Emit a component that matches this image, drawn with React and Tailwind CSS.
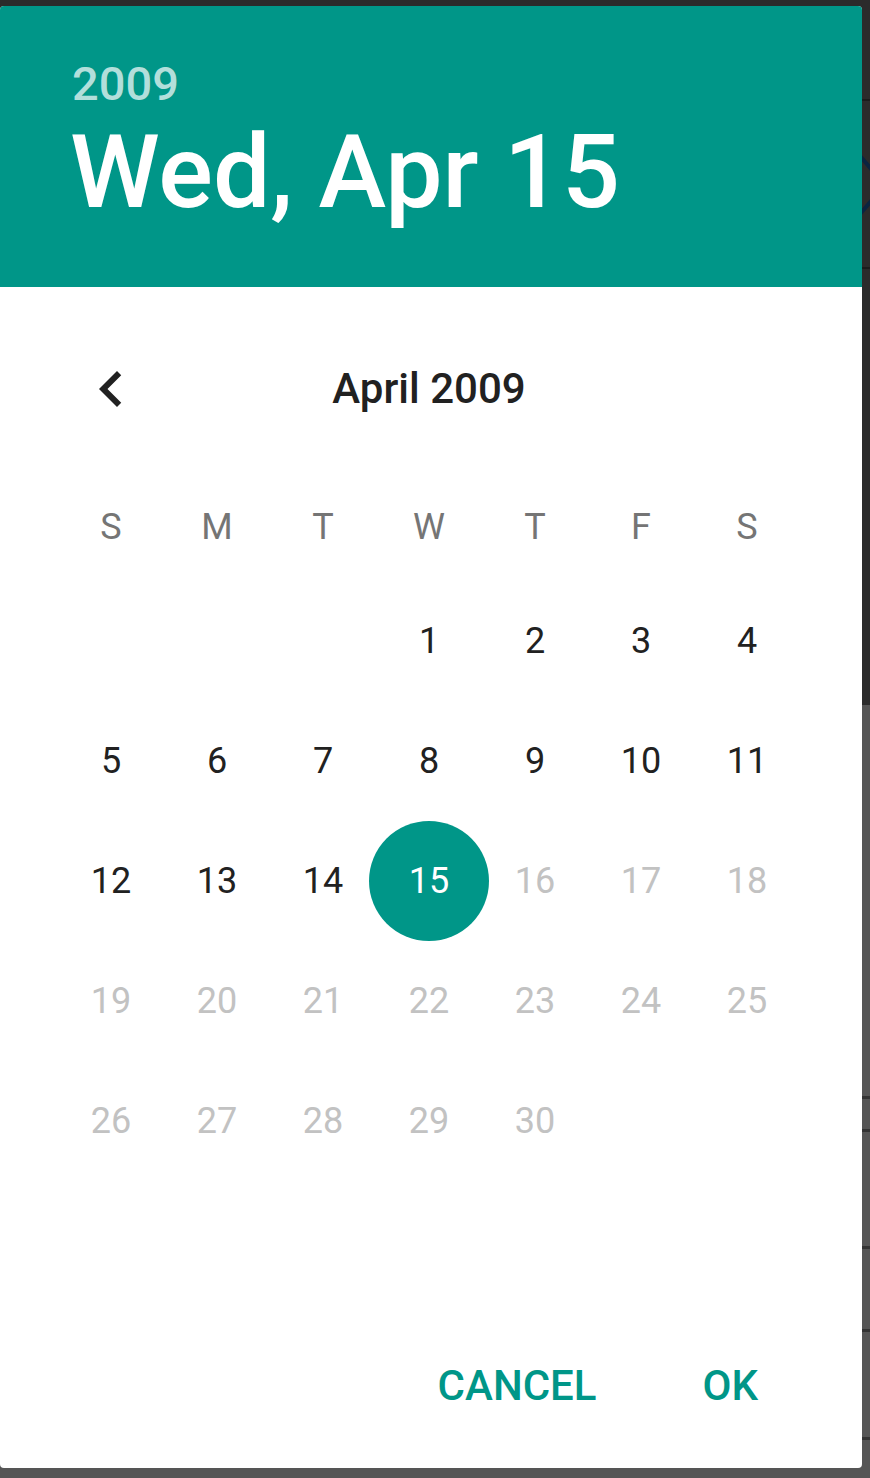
export default function App() {
  const rows = [
    [null, null, null, 1, 2, 3, 4],
    [5, 6, 7, 8, 9, 10, 11],
    [12, 13, 14, 15, 16, 17, 18],
    [19, 20, 21, 22, 23, 24, 25],
    [26, 27, 28, 29, 30, null, null],
  ];
  const weekdays = ["S", "M", "T", "W", "T", "F", "S"];
  const selected = 15;

  return (
    <div className="relative w-[870px] h-[1478px] overflow-hidden font-['Roboto',sans-serif]">
      {/* dimmed app behind the dialog */}
      <div className="flex flex-col h-full">
        <div className="h-[705px] bg-[#2b2b2b] flex flex-col">
          <div className="h-[99px]" />
          <div className="h-[2px] bg-[#1c1c1c]" />
          <div className="h-[49px]" />
          <svg className="h-[70px] w-full" viewBox="0 0 870 70">
            <polyline
              points="860,6 885,35 860,64"
              fill="none"
              stroke="#0b2440"
              strokeWidth="4"
            />
          </svg>
          <div className="h-[47px]" />
          <div className="h-[2px] bg-[#1c1c1c]" />
        </div>
        <div className="flex-1 bg-[#555555] flex flex-col">
          <div className="h-[391px]" />
          <div className="h-[3px] bg-[#333333]" />
          <div className="h-[30px]" />
          <div className="h-[3px] bg-[#333333]" />
          <div className="h-[114px]" />
          <div className="h-[3px] bg-[#333333]" />
          <div className="h-[80px]" />
          <div className="h-[3px] bg-[#333333]" />
          <div className="h-[105px]" />
          <div className="h-[3px] bg-[#333333]" />
        </div>
      </div>

      {/* dialog */}
      <div className="absolute left-0 top-[6px] w-[862px] h-[1462px] bg-white rounded-[4px] overflow-hidden flex flex-col">
        <div className="bg-[#009688] h-[281px] pl-[72px] pt-[54px] flex flex-col">
          <div className="text-[47px] leading-[47px] font-medium text-[#b2dfdb]">2009</div>
          <div className="mt-[14px] -ml-[2px] text-[102px] leading-[102px] font-medium text-white whitespace-nowrap">
            Wed, Apr 15
          </div>
        </div>

        <div className="pl-[58px] pr-[62px] pt-[42px]">
          <div className="flex items-center h-[120px]">
            <button className="ml-[17px] w-[72px] h-[72px] flex items-center justify-center">
              <svg width="72" height="72" viewBox="0 0 24 24">
                <path d="M15.41 7.41L14 6l-6 6 6 6 1.41-1.41L10.83 12z" fill="#212121" />
              </svg>
            </button>
            <div className="flex-1 text-center text-[42px] leading-[42px] font-medium text-[#212121]">
              April 2009
            </div>
            <div className="w-[72px] mr-[17px]" />
          </div>

          <div className="mt-[24px] grid grid-cols-7 h-[108px] items-center">
            {weekdays.map((d, i) => (
              <div key={i} className="text-center text-[36px] leading-[36px] text-[#757575]">
                {d}
              </div>
            ))}
          </div>

          <div className="grid grid-cols-7 auto-rows-[120px]">
            {rows.flat().map((d, i) => (
              <div key={i} className="flex items-center justify-center">
                {d === null ? null : d === selected ? (
                  <div className="w-[120px] h-[120px] shrink-0 rounded-full bg-[#009688] flex items-center justify-center text-[36px] leading-[36px] text-white">
                    {d}
                  </div>
                ) : (
                  <span
                    className={
                      d < selected
                        ? "text-[36px] leading-[36px] text-[#212121]"
                        : "text-[36px] leading-[36px] text-[#c2c2c2]"
                    }
                  >
                    {d}
                  </span>
                )}
              </div>
            ))}
          </div>
        </div>

        <div className="mt-auto mb-[22px] h-[120px] flex items-center justify-end pr-[104px] gap-[106px]">
          <button className="text-[42px] leading-[42px] font-medium text-[#009688]">CANCEL</button>
          <button className="text-[42px] leading-[42px] font-medium text-[#009688]">OK</button>
        </div>
      </div>
    </div>
  );
}
